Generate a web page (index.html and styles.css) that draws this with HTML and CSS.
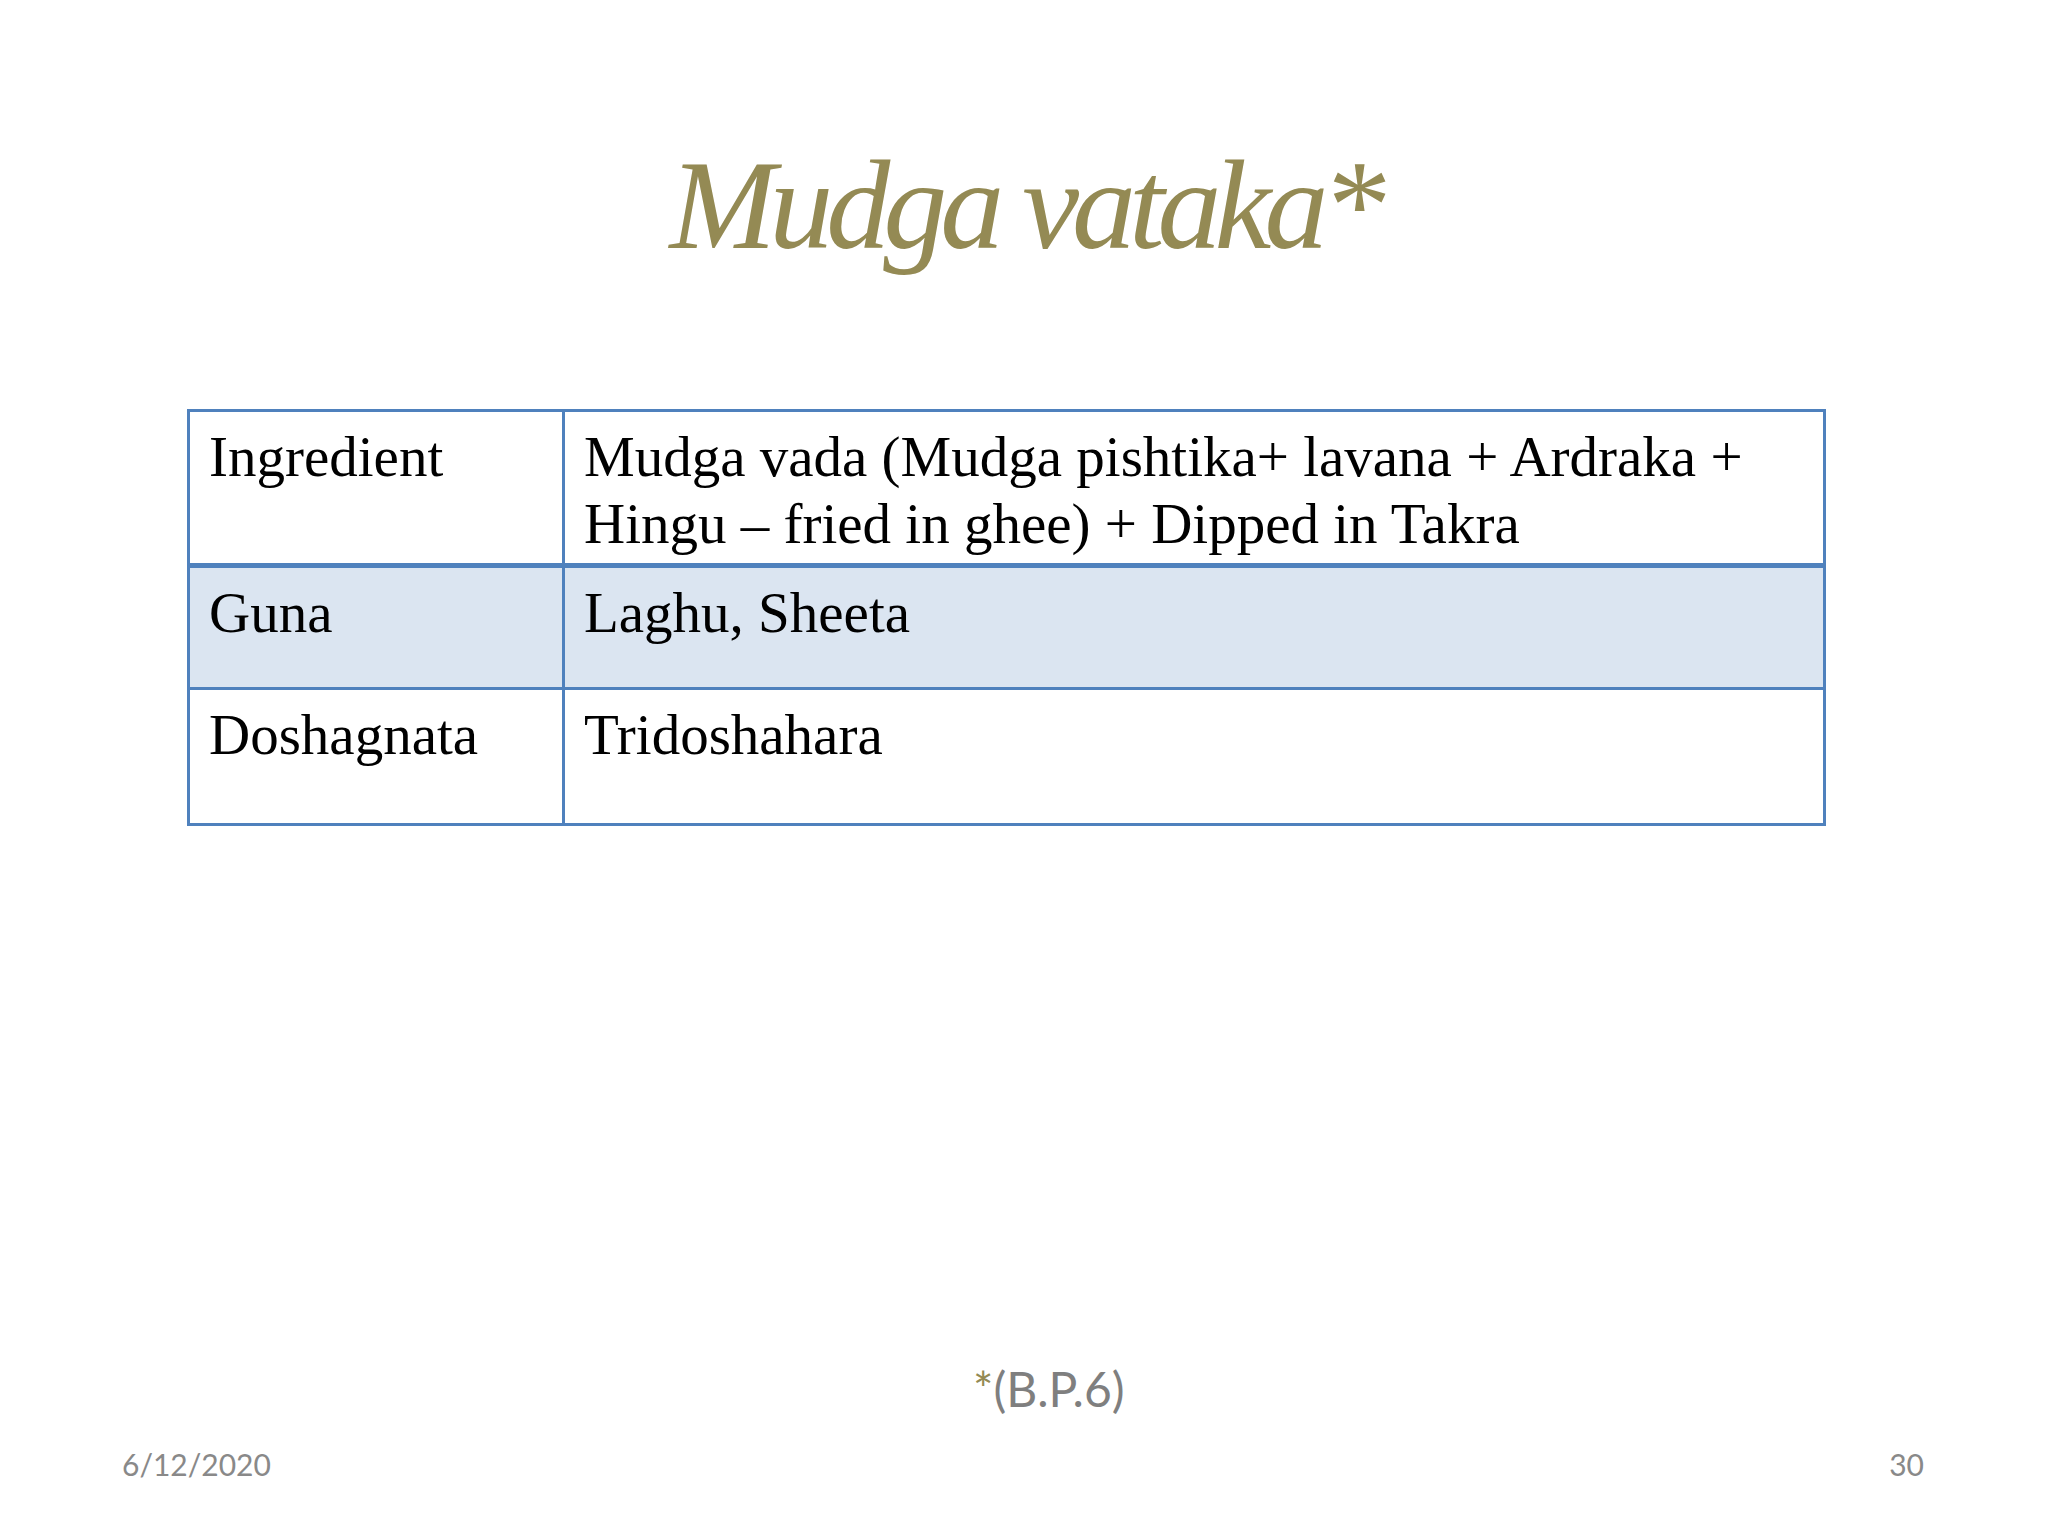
FILE: index.html
```html
<!DOCTYPE html>
<html lang="en">
<head>
<meta charset="utf-8">
<title>Mudga vataka</title>
<link rel="stylesheet" href="styles.css">
</head>
<body>
<div class="slide">
  <h1 class="title">Mudga vataka*</h1>
  <div class="table">
    <div class="row head">
      <div class="cell key">Ingredient</div>
      <div class="cell val">Mudga vada (Mudga pishtika+ lavana + Ardraka + Hingu – fried in ghee) + Dipped in Takra</div>
    </div>
    <div class="row alt">
      <div class="cell key">Guna</div>
      <div class="cell val">Laghu, Sheeta</div>
    </div>
    <div class="row last">
      <div class="cell key">Doshagnata</div>
      <div class="cell val">Tridoshahara</div>
    </div>
  </div>
  <p class="note"><span class="star">*</span>(B.P.6)</p>
  <div class="foot">
    <span class="date">6/12/2020</span>
    <span class="num">30</span>
  </div>
</div>
</body>
</html>
```

FILE: styles.css
```css
html, body {
  margin: 0;
  padding: 0;
  background: #ffffff;
}

.slide {
  width: 2048px;
  height: 1536px;
  display: flex;
  flex-direction: column;
  background: #ffffff;
  overflow: hidden;
}

.title {
  margin: 0;
  padding-top: 141px;
  font-family: "Liberation Serif", serif;
  font-style: italic;
  font-weight: normal;
  font-size: 128px;
  line-height: 128px;
  height: 128px;
  letter-spacing: -7px;
  text-align: center;
  color: #948A54;
}

.table {
  margin-top: 140px;
  margin-left: 187px;
  width: 1639px;
  box-sizing: border-box;
  border: 3px solid #4F81BD;
  display: flex;
  flex-direction: column;
}

.row {
  display: flex;
  box-sizing: border-box;
}

.row.head {
  height: 156px;
  border-bottom: 5px solid #4F81BD;
}

.row.alt {
  height: 122px;
  border-bottom: 3px solid #4F81BD;
  background: #DBE5F1;
}

.row.last {
  height: 133px;
}

.cell {
  box-sizing: border-box;
  padding: 11px 18px 0 19px;
  font-family: "Liberation Serif", serif;
  font-size: 57px;
  line-height: 67px;
  color: #000000;
}

.cell.key {
  width: 375px;
  flex: 0 0 375px;
  border-right: 3px solid #4F81BD;
}

.cell.val {
  flex: 1 1 auto;
}

.note {
  margin: 535px 0 0 0;
  padding-left: 973px;
  font-family: Lato, "Open Sans", sans-serif;
  font-size: 48px;
  line-height: 56px;
  color: #7F7F7F;
}

.star {
  color: #948A54;
}

.foot {
  margin-top: 29px;
  padding: 0 124px 0 122px;
  display: flex;
  justify-content: space-between;
  font-family: Lato, "Open Sans", sans-serif;
  font-size: 30px;
  line-height: 36px;
  color: #898989;
}
```
